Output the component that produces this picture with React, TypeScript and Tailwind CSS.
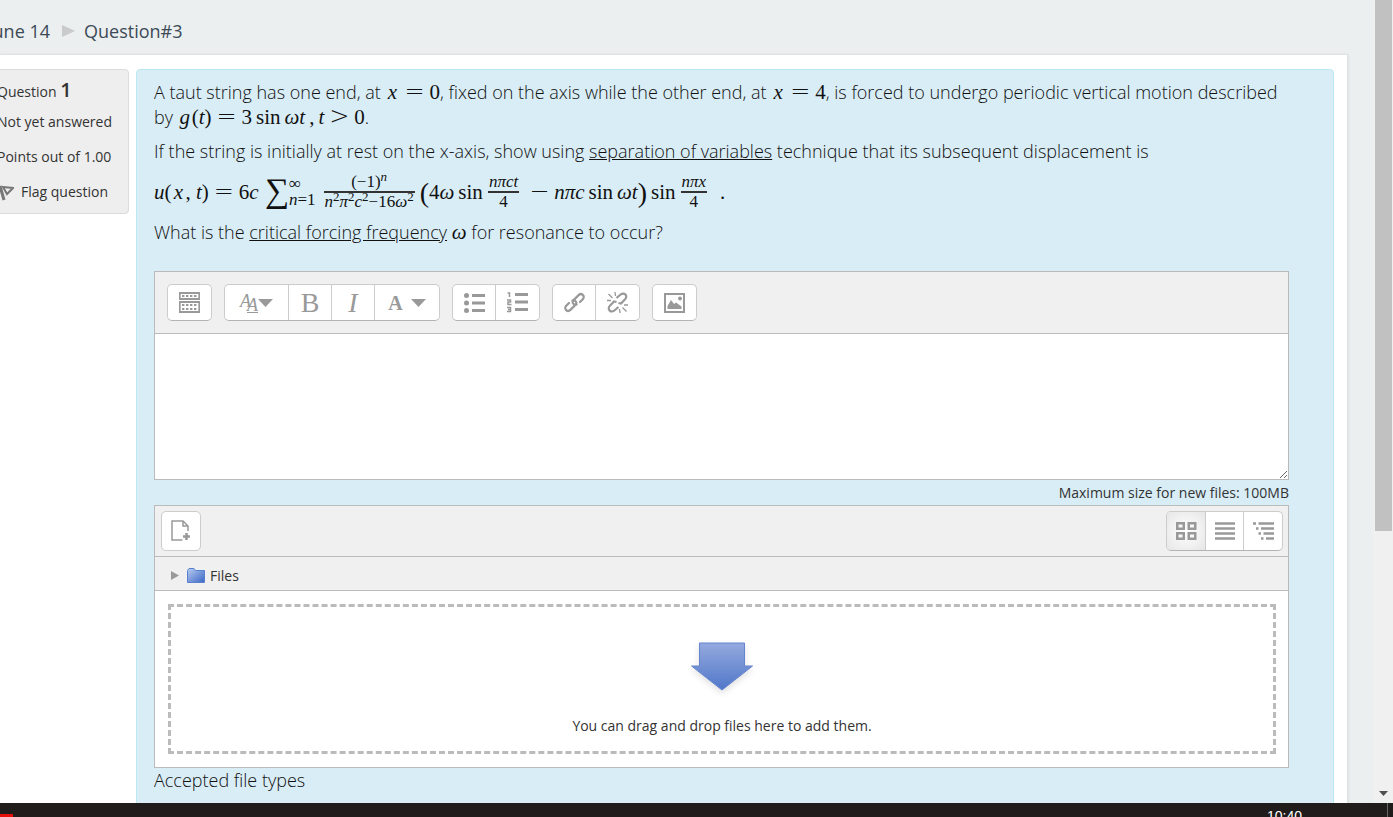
import type { ReactNode } from 'react';

interface ChildrenProps {
  children: ReactNode;
}

interface ToolButtonProps {
  label: string;
  wide?: boolean;
  children: ReactNode;
}

/* Math helpers */
function V({ children }: ChildrenProps) {
  return <i className="inline-block min-w-[14px] text-center">{children}</i>;
}

function Op({ children }: ChildrenProps) {
  return (
    <span className="mx-[5px] inline-block w-5 text-center font-['DejaVu_Sans'] text-[24px] leading-5 font-extralight">
      {children}
    </span>
  );
}

function Formula({ children }: ChildrenProps) {
  return (
    <span className="whitespace-nowrap font-['Liberation_Serif',serif] text-[21px] font-normal leading-[25px]">
      {children}
    </span>
  );
}

function Frac({ top, bottom }: { top: ReactNode; bottom: ReactNode }) {
  return (
    <span className="mx-[5px] inline-flex flex-col text-center text-[17px] leading-[18px]">
      <span className="border-b-2 border-[#333] px-px">{top}</span>
      <span className="px-px">{bottom}</span>
    </span>
  );
}

function Sup({ children }: ChildrenProps) {
  return <sup className="text-[13px] leading-none">{children}</sup>;
}

/* Editor toolbar */
function ButtonGroup({ children }: ChildrenProps) {
  return (
    <div className="flex h-[37px] divide-x divide-[#ccc] rounded-[5px] border border-[#ccc] border-b-[#b3b3b3] bg-white">
      {children}
    </div>
  );
}

function ToolButton({ label, wide, children }: ToolButtonProps) {
  return (
    <button
      type="button"
      aria-label={label}
      className={`flex items-center justify-center text-[#999] ${wide ? 'w-16' : 'w-[43px]'}`}
    >
      {children}
    </button>
  );
}

function Caret() {
  return (
    <svg width="15" height="8" viewBox="0 0 15 8" fill="currentColor">
      <path d="M0 0h15L7.5 8z" />
    </svg>
  );
}

function KeyboardIcon() {
  return (
    <svg width="21" height="21" viewBox="0 0 21 21" fill="none" stroke="currentColor">
      <path d="M.75 1h19.500v6H.75zM.75 10h19.500v10H.75z" strokeWidth="1.800" />
      <path d="M3 4h15M3 13h15M3 17h15" strokeWidth="2.200" strokeDasharray="2.400 1.600" />
    </svg>
  );
}

function BulletIcon() {
  return (
    <svg width="21" height="20" viewBox="0 0 21 20" fill="currentColor">
      <circle cx="2.5" cy="2.5" r="2.5" />
      <circle cx="2.5" cy="10" r="2.5" />
      <circle cx="2.5" cy="17.5" r="2.5" />
      <path d="M8 1h13v3H8zM8 8.500h13v3H8zM8 16h13v3H8z" />
    </svg>
  );
}

function NumberIcon() {
  return (
    <svg width="21" height="21" viewBox="0 0 21 21" fill="none" stroke="currentColor">
      <path d="M8 2.500h13M8 10h13M8 17.500h13" strokeWidth="3" />
      <path d="M.5 1h2v4M0 8h3.500v2H1v2.500h3.500M0 15.500h3.500v4H0M1 17.500h2.500" strokeWidth="1.500" />
    </svg>
  );
}

function LinkIcon() {
  return (
    <svg width="21" height="21" viewBox="0 0 21 21" fill="none" stroke="currentColor" strokeWidth="2.200" strokeLinecap="round">
      <path d="M12.500 12.500c-1.500.5-2.800 0-3.500-1.200-.6-1.100-.3-2.300.6-3.200l5-5c1.200-1.200 3-1.300 4.200-.2 1.300 1.200 1.200 3.100 0 4.300L16 10" />
      <path d="M8.500 8.500c1.500-.5 2.800 0 3.500 1.200.6 1.100.3 2.300-.6 3.200l-5 5c-1.200 1.200-3 1.300-4.200.2C.9 16.900 1 15 2.200 13.800L5 11" />
    </svg>
  );
}

function UnlinkIcon() {
  return (
    <svg width="21" height="21" viewBox="0 0 21 21" fill="none" stroke="currentColor" strokeWidth="2.200">
      <path d="M9.500 6l3.800-3.200c1.500-1.500 3.700-1.700 5-.4 1.400 1.300 1.200 3.500-.2 4.900L14 11.500l-2.500-.5" />
      <path d="M11.500 15l-3.800 3.200c-1.500 1.500-3.700 1.700-5 .4-1.400-1.300-1.200-3.500.2-4.900L7 9.500l2.500.5" />
      <path d="M8 0l.5 4M1.500 2l4 4M0 8.500h4M17 13h4M15.500 15.500l4 4M12.500 17l.5 4" strokeWidth="1.300" />
    </svg>
  );
}

function ImageIcon() {
  return (
    <svg width="21" height="20" viewBox="0 0 21 20" fill="currentColor">
      <path d="M1 1h19v18H1z" fill="none" stroke="currentColor" strokeWidth="2" />
      <path d="M3.500 16v-3l3.500-6 3 4 2-1.500 5.500 4V16z" />
      <circle cx="16" cy="5.500" r="2" />
    </svg>
  );
}

/* File manager icons */
function AddFileIcon() {
  return (
    <svg width="20" height="22" viewBox="0 0 20 22" fill="none" stroke="#999" strokeWidth="1.500">
      <path d="M11.500 20H1V1h11l5 5v5M12 1v5h5" />
      <path d="M15.500 13v7M12 16.500h7" strokeWidth="2.500" />
    </svg>
  );
}

function GridIcon() {
  return (
    <svg width="21" height="18" viewBox="0 0 21 18" fill="none" stroke="#999" strokeWidth="2.500">
      <path d="M1.250 1.250h6.500v5.500h-6.500zM12.750 1.250h6.500v5.500h-6.500zM1.250 11.250h6.500v5.500h-6.500zM12.750 11.250h6.500v5.500h-6.500z" />
    </svg>
  );
}

function ListIcon() {
  return (
    <svg width="20" height="18" viewBox="0 0 20 18" stroke="#999" strokeWidth="2.500">
      <path d="M0 1.500h20M0 6.500h20M0 11.500h20M0 16.500h20" />
    </svg>
  );
}

function TreeIcon() {
  return (
    <svg width="21" height="18" viewBox="0 0 21 18" stroke="#999" strokeWidth="2.500">
      <path d="M0 1.500h3M5.500 1.500H21M3 6.500h2.500M8 6.500h13M5.500 11.500H8M10.500 11.500H21M8 16.500h2.500M13 16.500h8" />
    </svg>
  );
}

function FolderIcon() {
  return (
    <svg width="18" height="16" viewBox="0 0 18 16">
      <defs>
        <linearGradient id="folder" x1="0" y1="0" x2="1" y2="1">
          <stop offset="0" stopColor="#b9cdf2" />
          <stop offset="1" stopColor="#3b66c4" />
        </linearGradient>
      </defs>
      <path d="M.5 14.500V2.500L2 .5h5l1.500 2h9v12z" fill="url(#folder)" stroke="#5a80d0" />
    </svg>
  );
}

function DropArrow() {
  return (
    <svg width="64" height="58" viewBox="0 0 64 58" className="drop-shadow-md">
      <defs>
        <linearGradient id="arrow" x1="0" y1="0" x2="0" y2="1">
          <stop offset="0" stopColor="#94a9de" />
          <stop offset="1" stopColor="#5077c9" />
        </linearGradient>
      </defs>
      <path d="M9.500 1h45v23h8L32 48 1.500 24h8z" fill="url(#arrow)" stroke="#6484cf" />
    </svg>
  );
}

function QuestionInfo() {
  return (
    <aside className="-ml-4 h-[145px] w-[145px] shrink-0 overflow-hidden rounded-sm border border-[#dcdcdc] bg-[#eee] pl-3 text-sm leading-5 whitespace-nowrap">
      <h3 className="mt-2 h-6 leading-6">
        Question <b className="text-xl leading-6 font-semibold">1</b>
      </h3>
      <div className="mt-[10px]">Not yet answered</div>
      <div className="mt-[15px]">Points out of 1.00</div>
      <a href="#flag" className="mt-[15px] flex items-center gap-[7px]">
        <svg width="17" height="17" viewBox="0 0 17 17" fill="none" stroke="#777" strokeWidth="2">
          <path d="M3 2l4 14" strokeWidth="3" />
          <path d="M6 3l10 1-6 6z" />
        </svg>
        Flag question
      </a>
    </aside>
  );
}

function QuestionText() {
  return (
    <div className="text-lg leading-[25px] font-light text-[#111]">
      <p>
        A taut string has one end, at <Formula><V>x</V><Op>=</Op>0</Formula>, fixed on the axis while the
        other end, at <Formula><V>x</V><Op>=</Op>4</Formula>, is forced to undergo periodic vertical motion
        described by{' '}
        <Formula>
          <V>g</V>(<i>t</i>)<Op>=</Op>3<span className="mx-1">sin</span><i>ωt</i>
          <span className="mx-1">,</span><i>t</i><Op>&gt;</Op>0
        </Formula>.
      </p>
      <p className="mt-[9px]">
        If the string is initially at rest on the x-axis, show using <u>separation of variables</u> technique
        that its subsequent displacement is
      </p>
      <div className="mt-[9px] flex h-[38px] items-center whitespace-nowrap font-['Liberation_Serif',serif] text-[21px] font-normal leading-[25px]">
        <span><i>u</i>(<V>x</V>, <i>t</i>)<Op>=</Op>6<i>c</i></span>
        <span className="ml-[6px] pb-1 text-[34px]">∑</span>
        <span className="flex flex-col pr-[3px] text-[17px] leading-4">
          <span>∞</span>
          <span><i>n</i>=1</span>
        </span>
        <Frac
          top={<>(−1)<Sup><i>n</i></Sup></>}
          bottom={<><i>n</i><Sup>2</Sup><i>π</i><Sup>2</Sup><i>c</i><Sup>2</Sup>−16<i>ω</i><Sup>2</Sup></>}
        />
        <span className="text-[28px]">(</span>
        <span>4<V>ω</V><span className="ml-1">sin</span></span>
        <Frac top={<i>nπct</i>} bottom="4" />
        <span><Op>−</Op><i>nπc</i><span className="mx-1">sin</span><i>ωt</i></span>
        <span className="text-[28px]">)</span>
        <span className="ml-1">sin</span>
        <Frac top={<i>nπx</i>} bottom="4" />
        <span className="ml-2">.</span>
      </div>
      <p className="mt-[9px]">
        What is the <u>critical forcing frequency</u> <Formula><V>ω</V></Formula> for resonance to occur?
      </p>
    </div>
  );
}

function Editor() {
  return (
    <div className="mt-[26px] border border-[#bbb] bg-white">
      <div className="flex gap-3 border-b border-[#bbb] bg-[#f0f0f0] p-3">
        <ButtonGroup>
          <ToolButton label="Show more buttons"><KeyboardIcon /></ToolButton>
        </ButtonGroup>
        <ButtonGroup>
          <ToolButton label="Paragraph styles" wide>
            <span className="flex items-center font-['Liberation_Serif',serif] text-lg leading-none font-normal italic">
              <span className="pb-1">A</span>
              <u className="-ml-1 pt-1">A</u>
            </span>
            <Caret />
          </ToolButton>
          <ToolButton label="Bold">
            <span className="font-['Liberation_Serif',serif] text-[28px] font-normal">B</span>
          </ToolButton>
          <ToolButton label="Italic">
            <span className="font-['Liberation_Serif',serif] text-[28px] font-normal italic">I</span>
          </ToolButton>
          <ToolButton label="Font colour" wide>
            <span className="mr-2 font-['Liberation_Serif',serif] text-xl font-bold">A</span>
            <Caret />
          </ToolButton>
        </ButtonGroup>
        <ButtonGroup>
          <ToolButton label="Unordered list"><BulletIcon /></ToolButton>
          <ToolButton label="Ordered list"><NumberIcon /></ToolButton>
        </ButtonGroup>
        <ButtonGroup>
          <ToolButton label="Link"><LinkIcon /></ToolButton>
          <ToolButton label="Unlink"><UnlinkIcon /></ToolButton>
        </ButtonGroup>
        <ButtonGroup>
          <ToolButton label="Image"><ImageIcon /></ToolButton>
        </ButtonGroup>
      </div>
      <textarea aria-label="Answer text" className="block h-[145px] w-full resize-y p-2 outline-none" />
    </div>
  );
}

function FileManager() {
  return (
    <div className="border border-[#bbb] bg-white">
      <div className="flex items-center justify-between border-b border-[#bbb] bg-[#f0f0f0] py-[5px] pr-[5px] pl-[6px]">
        <button
          type="button"
          aria-label="Add file"
          className="flex size-10 items-center justify-center rounded-[5px] border border-[#ccc] bg-white"
        >
          <AddFileIcon />
        </button>
        <div className="flex h-10 divide-x divide-[#ccc] overflow-hidden rounded-[5px] border border-[#ccc] border-b-[#b3b3b3] bg-white">
          <button
            type="button"
            aria-label="Display as icons"
            className="flex w-[39px] items-center justify-center bg-radial from-white to-[#e6e6e6]"
          >
            <GridIcon />
          </button>
          <button type="button" aria-label="Display as list" className="flex w-[38px] items-center justify-center">
            <ListIcon />
          </button>
          <button type="button" aria-label="Display as tree" className="flex w-[38px] items-center justify-center">
            <TreeIcon />
          </button>
        </div>
      </div>
      <div className="flex h-[34px] items-center border-b border-[#bbb] bg-[#f0f0f0] pt-1 pl-4 text-sm">
        <svg width="8" height="9" viewBox="0 0 8 9" fill="#999">
          <path d="M0 0l8 4.500L0 9z" />
        </svg>
        <a href="#files" className="ml-2 flex items-center gap-[5px]">
          <FolderIcon />
          Files
        </a>
      </div>
      <div className="py-[13px] pr-3 pl-[13px]">
        <div className="flex h-[150px] flex-col items-center border-[3px] border-dashed border-[#bbb] pt-[35px] text-sm leading-5">
          <DropArrow />
          <p className="mt-4">You can drag and drop files here to add them.</p>
        </div>
      </div>
    </div>
  );
}

export default function App() {
  return (
    <div className="flex h-screen flex-col overflow-hidden font-['Open_Sans',sans-serif] text-[#333]">
      <div className="flex min-h-0 flex-1">
        <div className="flex min-w-0 flex-1 flex-col overflow-hidden bg-[#ebeff0]">
          {/* Breadcrumb */}
          <nav className="flex h-[54px] shrink-0 items-center pt-2 text-lg text-[#3b4a56]">
            <span className="flex w-[50px] justify-end overflow-hidden whitespace-nowrap">
              <a href="#june">June 14</a>
            </span>
            <svg width="13" height="12" viewBox="0 0 13 12" fill="#c8cacb" className="mr-[9px] ml-3">
              <path d="M0 0l13 6L0 12z" />
            </svg>
            <a href="#question">Question#3</a>
          </nav>

          {/* Question */}
          <main className="mr-[25px] flex flex-1 items-start gap-[7px] border-t border-r border-[#dfe2e3] bg-white pt-[14px] pr-[13px] shadow">
            <QuestionInfo />
            <section className="min-w-0 flex-1 rounded border border-[#bce8f1] bg-[#d9edf6] pt-[10px] pr-11 pb-10 pl-[17px]">
              <QuestionText />
              <Editor />
              <div className="h-[25px] text-right text-sm leading-[25px]">Maximum size for new files: 100MB</div>
              <FileManager />
              <p className="text-lg leading-[25px] font-light text-[#111]">Accepted file types</p>
            </section>
          </main>
        </div>

        {/* Scrollbar */}
        <div className="flex w-5 shrink-0 flex-col items-center justify-between bg-[#f0f0f0] pr-px pb-[7px] pl-[2px]">
          <div className="h-2/3 w-full bg-[#c1c1c1]" />
          <svg width="9" height="5" viewBox="0 0 9 5" fill="#505050">
            <path d="M0 0h9L4.500 5z" />
          </svg>
        </div>
      </div>

      {/* Taskbar */}
      <footer className="flex h-[14px] shrink-0 items-start overflow-hidden bg-[#201c1b] text-white">
        <div className="h-[3px] w-[13px] self-end bg-[#e60f0a]" />
        <time className="mt-[3px] mr-[85px] ml-auto font-['Liberation_Sans',sans-serif] text-sm leading-5">10:40</time>
        <div className="mr-[5px] h-full w-px bg-[#666]" />
      </footer>
    </div>
  );
}
